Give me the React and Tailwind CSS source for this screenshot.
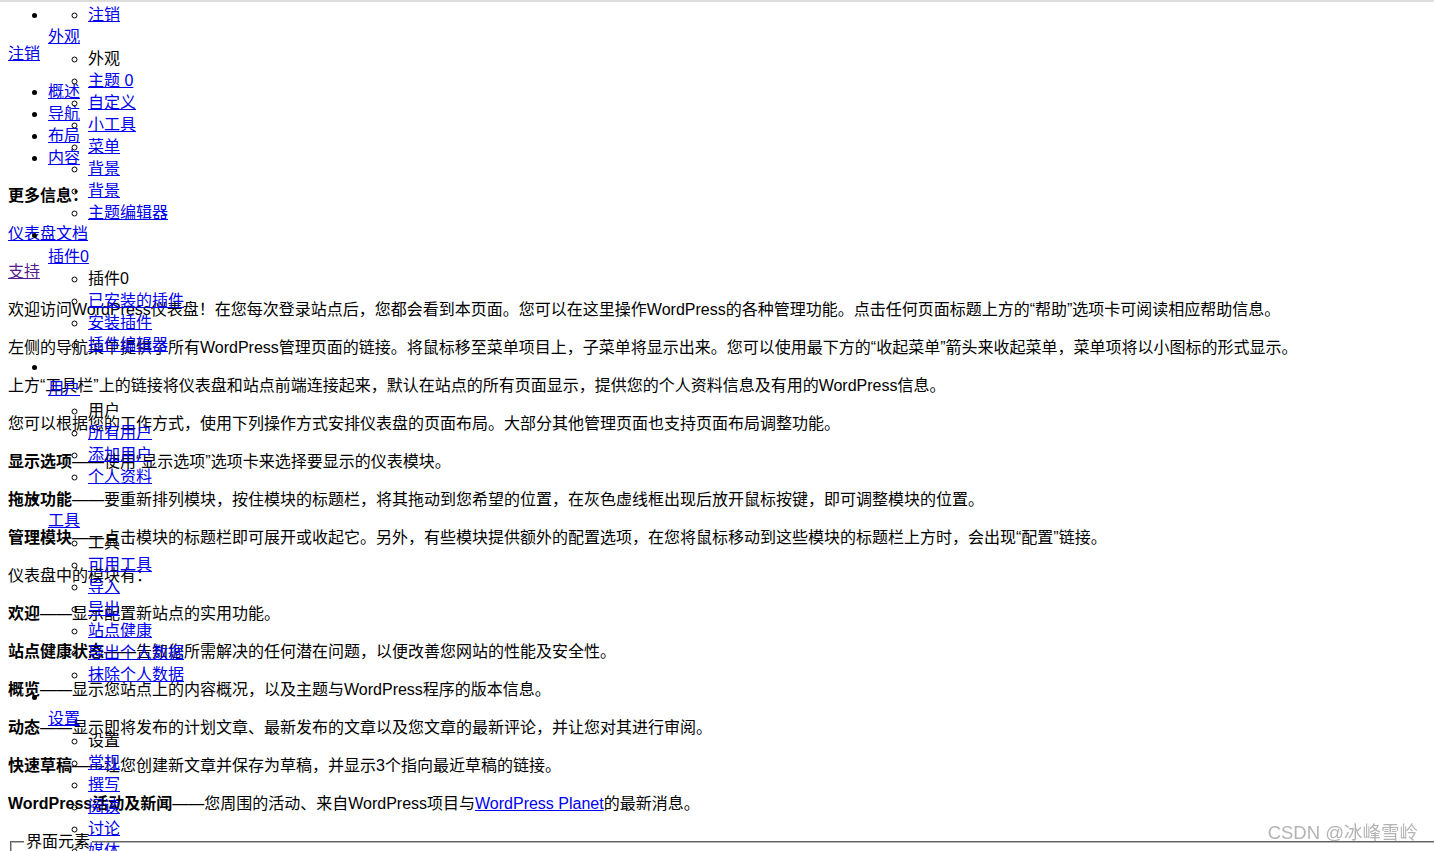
import React from 'react'

const link = 'text-[#0000ee] underline'

// admin menu that spills over the page content
const menu = [
  { title: '外观', items: ['主题 0', '自定义', '小工具', '菜单', '背景', '背景', '主题编辑器'] },
  { title: '插件0', items: ['已安装的插件', '安装插件', '插件编辑器'] },
  { title: '用户', items: ['所有用户', '添加用户', '个人资料'] },
  { title: '工具', items: ['可用工具', '导入', '导出', '站点健康', '导出个人数据', '抹除个人数据'] },
  { title: '设置', items: ['常规', '撰写', '阅读', '讨论', '媒体', '固定链接', '隐私'] },
]

const intro = [
  '欢迎访问WordPress仪表盘！在您每次登录站点后，您都会看到本页面。您可以在这里操作WordPress的各种管理功能。点击任何页面标题上方的“帮助”选项卡可阅读相应帮助信息。',
  '左侧的导航菜单提供了所有WordPress管理页面的链接。将鼠标移至菜单项目上，子菜单将显示出来。您可以使用最下方的“收起菜单”箭头来收起菜单，菜单项将以小图标的形式显示。',
  '上方“工具栏”上的链接将仪表盘和站点前端连接起来，默认在站点的所有页面显示，提供您的个人资料信息及有用的WordPress信息。',
  '您可以根据您的工作方式，使用下列操作方式安排仪表盘的页面布局。大部分其他管理页面也支持页面布局调整功能。',
]

const layout = [
  ['显示选项', '——使用“显示选项”选项卡来选择要显示的仪表模块。'],
  ['拖放功能', '——要重新排列模块，按住模块的标题栏，将其拖动到您希望的位置，在灰色虚线框出现后放开鼠标按键，即可调整模块的位置。'],
  ['管理模块', '——点击模块的标题栏即可展开或收起它。另外，有些模块提供额外的配置选项，在您将鼠标移动到这些模块的标题栏上方时，会出现“配置”链接。'],
]

const boxes = [
  ['欢迎', '——显示配置新站点的实用功能。'],
  ['站点健康状态', '——告知您所需解决的任何潜在问题，以便改善您网站的性能及安全性。'],
  ['概览', '——显示您站点上的内容概况，以及主题与WordPress程序的版本信息。'],
  ['动态', '——显示即将发布的计划文章、最新发布的文章以及您文章的最新评论，并让您对其进行审阅。'],
  ['快速草稿', '——让您创建新文章并保存为草稿，并显示3个指向最近草稿的链接。'],
]

function AdminMenu() {
  return (
    <ul className="absolute left-2 top-[2px] list-disc pl-10">
      {menu.map((m, i) => (
        <li key={m.title}>
          {i === 0 ? (
            <ul className="list-[circle] pl-10">
              <li><a href="#" className={link}>注销</a></li>
            </ul>
          ) : (
            <div>{'\u00a0'}</div>
          )}
          <a href="#" className={link}>{m.title}</a>
          <ul className="list-[circle] pl-10">
            <li>{m.title}</li>
            {m.items.map((it, j) => (
              <li key={j}><a href="#" className={link}>{it}</a></li>
            ))}
          </ul>
        </li>
      ))}
    </ul>
  )
}

export default function App() {
  return (
    <div className="relative min-h-screen overflow-x-hidden border-t-2 border-[#dedede] bg-white text-base leading-[22px] text-black font-['Liberation_Sans','Noto_Sans_CJK_SC',sans-serif]">
      <div className="px-2 pt-[41px]">
        <div><a href="#" className={link}>注销</a></div>
        <ul className="my-4 list-disc pl-10">
          {['概述', '导航', '布局', '内容'].map(t => (
            <li key={t}><a href="#" className={link}>{t}</a></li>
          ))}
        </ul>
        <p className="my-4 font-bold">更多信息：</p>
        <p className="my-4"><a href="#" className={link}>仪表盘文档</a></p>
        <p className="my-4"><a href="#" className="text-[#551a8b] underline">支持</a></p>

        {intro.map((t, i) => <p key={i} className="my-4">{t}</p>)}
        {layout.map(([b, t]) => (
          <p key={b} className="my-4"><strong className="font-bold">{b}</strong>{t}</p>
        ))}
        <p className="my-4">仪表盘中的模块有：</p>
        {boxes.map(([b, t]) => (
          <p key={b} className="my-4"><strong className="font-bold">{b}</strong>{t}</p>
        ))}
        <p className="my-4">
          <strong className="font-bold">WordPress活动及新闻</strong>——您周围的活动、来自WordPress项目与<a href="#" className={link}>WordPress Planet</a>的最新消息。
        </p>

        <fieldset className="ml-[2px] -mr-4 h-[160px] border-2 border-[#b5b5b5] px-3 pb-3 [border-style:groove]">
          <legend className="px-[2px]">界面元素</legend>
        </fieldset>
      </div>

      <AdminMenu />

      <div className="fixed bottom-[6px] right-4 text-[18.5px] leading-[25px] text-[#b4b4b4] font-['Liberation_Sans','Noto_Sans_CJK_SC',sans-serif]">
        CSDN @冰峰雪岭
      </div>
    </div>
  )
}
